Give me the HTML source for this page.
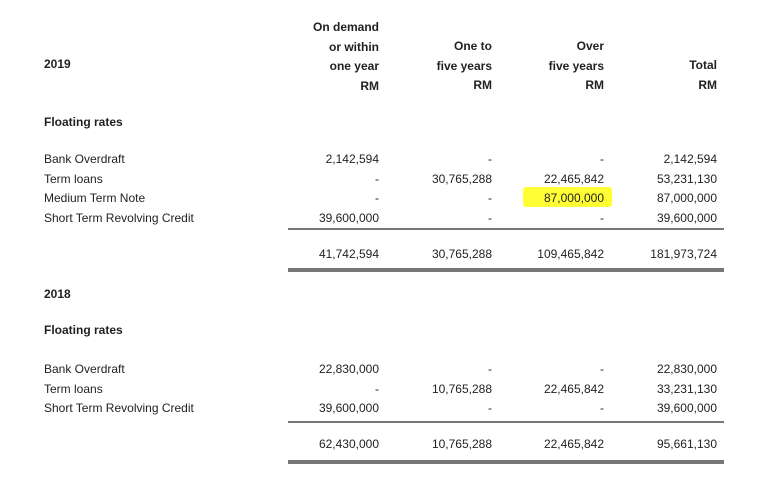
<!DOCTYPE html>
<html><head><style>
body{margin:0;width:768px;height:485px;background:#fff;font-family:"Liberation Sans",sans-serif;font-size:12px;color:#222;position:relative;overflow:hidden}
.t{position:absolute;white-space:nowrap;line-height:14px}
.b{font-weight:bold}
.r{text-align:right;width:120px}
.l{position:absolute;left:288px;width:436px;background:#777}
.hl{position:absolute;background:#ffff33;border-radius:3px}
</style></head><body>
<div class="t b" style="left:44px;top:57px">2019</div>
<div class="t b r" style="left:259px;top:18px;line-height:19.5px">On demand<br>or within<br>one year<br>RM</div>
<div class="t b r" style="left:372px;top:37px;line-height:19.5px">One to<br>five years<br>RM</div>
<div class="t b r" style="left:484px;top:37px;line-height:19.5px">Over<br>five years<br>RM</div>
<div class="t b r" style="left:597px;top:56px;line-height:19.5px">Total<br>RM</div>
<div class="t b" style="left:44px;top:115px">Floating rates</div>
<div class="hl" style="left:523px;top:187px;width:89px;height:20px"></div>
<div class="t" style="left:44px;top:150px;line-height:19.5px">Bank Overdraft<br>Term loans<br>Medium Term Note<br>Short Term Revolving Credit</div>
<div class="t r" style="left:259px;top:150px;line-height:19.5px">2,142,594<br>-<br>-<br>39,600,000</div>
<div class="t r" style="left:372px;top:150px;line-height:19.5px">-<br>30,765,288<br>-<br>-</div>
<div class="t r" style="left:484px;top:150px;line-height:19.5px">-<br>22,465,842<br>87,000,000<br>-</div>
<div class="t r" style="left:597px;top:150px;line-height:19.5px">2,142,594<br>53,231,130<br>87,000,000<br>39,600,000</div>
<div class="l" style="top:228px;height:2px"></div>
<div class="t r" style="left:259px;top:247px">41,742,594</div>
<div class="t r" style="left:372px;top:247px">30,765,288</div>
<div class="t r" style="left:484px;top:247px">109,465,842</div>
<div class="t r" style="left:597px;top:247px">181,973,724</div>
<div class="l" style="top:268px;height:4px"></div>
<div class="t b" style="left:44px;top:287px">2018</div>
<div class="t b" style="left:44px;top:323px">Floating rates</div>
<div class="t" style="left:44px;top:360px;line-height:19.5px">Bank Overdraft<br>Term loans<br>Short Term Revolving Credit</div>
<div class="t r" style="left:259px;top:360px;line-height:19.5px">22,830,000<br>-<br>39,600,000</div>
<div class="t r" style="left:372px;top:360px;line-height:19.5px">-<br>10,765,288<br>-</div>
<div class="t r" style="left:484px;top:360px;line-height:19.5px">-<br>22,465,842<br>-</div>
<div class="t r" style="left:597px;top:360px;line-height:19.5px">22,830,000<br>33,231,130<br>39,600,000</div>
<div class="l" style="top:421px;height:2px"></div>
<div class="t r" style="left:259px;top:437px">62,430,000</div>
<div class="t r" style="left:372px;top:437px">10,765,288</div>
<div class="t r" style="left:484px;top:437px">22,465,842</div>
<div class="t r" style="left:597px;top:437px">95,661,130</div>
<div class="l" style="top:460px;height:4px"></div>
</body></html>
